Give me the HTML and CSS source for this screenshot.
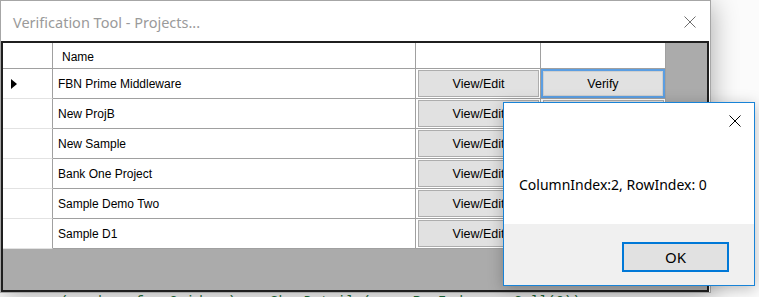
FILE: index.html
```html
<!DOCTYPE html>
<html lang="en">
<head>
  <meta charset="UTF-8" />
  <title>Verification Tool - Projects...</title>
  <link rel="stylesheet" href="styles.css">
</head>
<body>
  <div class="desktop">
    <div class="code-line">(sender, fromGrid, e) =&gt; ShowDetails(args.RowIndex, e.Cell(0));</div>

    <div class="window main-window">
      <div class="titlebar">
        <span class="title">Verification Tool - Projects...</span>
        <svg class="close" width="12" height="12" viewBox="0 0 12 12">
          <path d="M0.5 0.5 L11.5 11.5 M11.5 0.5 L0.5 11.5" stroke="#6f6f6f" stroke-width="1" fill="none"/>
        </svg>
      </div>

      <div class="grid-frame">
        <div class="grid">
          <!-- header -->
          <div class="cell rowhead head"></div>
          <div class="cell head name-head">Name</div>
          <div class="cell head"></div>
          <div class="cell head"></div>

          <!-- row 1 (current) -->
          <div class="cell rowhead"><span class="arrow"></span></div>
          <div class="cell name">FBN Prime Middleware</div>
          <div class="cell btn-cell"><button class="grid-btn">View/Edit</button></div>
          <div class="cell btn-cell focused"><button class="grid-btn">Verify</button></div>

          <div class="cell rowhead"></div>
          <div class="cell name">New ProjB</div>
          <div class="cell btn-cell"><button class="grid-btn">View/Edit</button></div>
          <div class="cell btn-cell"><button class="grid-btn">Verify</button></div>

          <div class="cell rowhead"></div>
          <div class="cell name">New Sample</div>
          <div class="cell btn-cell"><button class="grid-btn">View/Edit</button></div>
          <div class="cell btn-cell"><button class="grid-btn">Verify</button></div>

          <div class="cell rowhead"></div>
          <div class="cell name">Bank One Project</div>
          <div class="cell btn-cell"><button class="grid-btn">View/Edit</button></div>
          <div class="cell btn-cell"><button class="grid-btn">Verify</button></div>

          <div class="cell rowhead"></div>
          <div class="cell name">Sample Demo Two</div>
          <div class="cell btn-cell"><button class="grid-btn">View/Edit</button></div>
          <div class="cell btn-cell"><button class="grid-btn">Verify</button></div>

          <div class="cell rowhead"></div>
          <div class="cell name">Sample D1</div>
          <div class="cell btn-cell"><button class="grid-btn">View/Edit</button></div>
          <div class="cell btn-cell"><button class="grid-btn">Verify</button></div>
        </div>
      </div>
    </div>

    <!-- message box -->
    <div class="window msgbox">
      <div class="msg-body">
        <svg class="msg-close" width="12" height="12" viewBox="0 0 12 12">
          <path d="M0.5 0.5 L11.5 11.5 M11.5 0.5 L0.5 11.5" stroke="#000" stroke-width="1" fill="none"/>
        </svg>
        <p class="msg-text">ColumnIndex:2, RowIndex: 0</p>
      </div>
      <div class="msg-footer">
        <button class="ok-btn">OK</button>
      </div>
    </div>
  </div>
</body>
</html>
```

FILE: styles.css
```css
body {
  margin: 0;
  background-color: white;
  font-family: "Liberation Sans", Arial, sans-serif;
}

.desktop {
  position: relative;
  width: 759px;
  height: 297px;
  overflow: hidden;
  background-color: #fbfbfb;
}

.code-line {
  padding: 295px 0 0 60px;
  font: 14px/14px "Liberation Mono", monospace;
  color: #1d6f3a;
  white-space: nowrap;
}

.window {
  position: absolute;
  box-sizing: border-box;
  background-color: white;
}

.main-window {
  left: 0;
  top: 0;
  width: 711px;
  height: 293px;
  border: 1px solid #a6a6a6;
  box-shadow: 2px 4px 24px rgba(0, 0, 0, 0.3);
  display: flex;
  flex-direction: column;
}

.titlebar {
  height: 40px;
  display: flex;
  align-items: center;
  justify-content: space-between;
  padding: 2px 14px 0 12px;
  box-sizing: border-box;
}

.title {
  font-family: "Segoe UI", "Noto Sans", sans-serif;
  font-size: 14.5px;
  color: #9a9a9a;
}

.grid-frame {
  flex: 1;
  margin-right: 1px;
  border: 2px solid #1f1f1f;
  background-color: #ababab;
}

.grid {
  display: grid;
  grid-template-columns: 50px 363px 125px 125px;
  grid-template-rows: 26px repeat(6, 30px);
  width: 663px;
}

.cell {
  box-sizing: border-box;
  background-color: white;
  border-right: 1px solid #a0a0a0;
  border-bottom: 1px solid #a0a0a0;
  display: flex;
  align-items: center;
  font-size: 12px;
  color: #000;
}

.rowhead {
  border-bottom-color: #e2e2e2;
  padding-left: 8px;
}

.rowhead.head {
  border-bottom-color: #a0a0a0;
}

.name-head {
  padding: 2px 0 0 9px;
}

.name {
  padding: 1px 0 0 5px;
}

.arrow {
  width: 0;
  height: 0;
  border-left: 6px solid #000;
  border-top: 5px solid transparent;
  border-bottom: 5px solid transparent;
}

.btn-cell {
  padding: 1px 1px 1px 2px;
  align-items: stretch;
}

.grid-btn {
  flex: 1;
  margin: 0;
  border: 1px solid #adadad;
  background-color: #e1e1e1;
  font-family: "Liberation Sans", Arial, sans-serif;
  font-size: 12.5px;
  color: #000;
  padding: 1px 0 0;
}

.btn-cell.focused {
  padding: 0;
}

.btn-cell.focused .grid-btn {
  border: 2px solid #5b9ee2;
  box-shadow: inset 0 0 0 1px #cfcfcf;
}

/* message box */
.msgbox {
  left: 503px;
  top: 102px;
  width: 252px;
  height: 184px;
  border: 1px solid #1883d7;
  box-shadow: 0 3px 14px rgba(0, 0, 0, 0.25);
  display: flex;
  flex-direction: column;
}

.msg-body {
  height: 121px;
  display: flex;
  flex-direction: column;
  padding: 12px 13px 0 15px;
  box-sizing: border-box;
}

.msg-close {
  align-self: flex-end;
}

.msg-text {
  margin: 48px 0 0;
  font-family: "Segoe UI", "Noto Sans", sans-serif;
  font-size: 14px;
  color: #000;
}

.msg-footer {
  flex: 1;
  background-color: #f0f0f0;
  display: flex;
  justify-content: flex-end;
  align-items: flex-start;
  padding: 18px 25px 0 0;
}

.ok-btn {
  width: 107px;
  height: 30px;
  border: 2px solid #0078d7;
  background-color: #e1e1e1;
  font-family: "Segoe UI", "Noto Sans", sans-serif;
  font-size: 15px;
  color: #000;
  padding: 0;
}
```
